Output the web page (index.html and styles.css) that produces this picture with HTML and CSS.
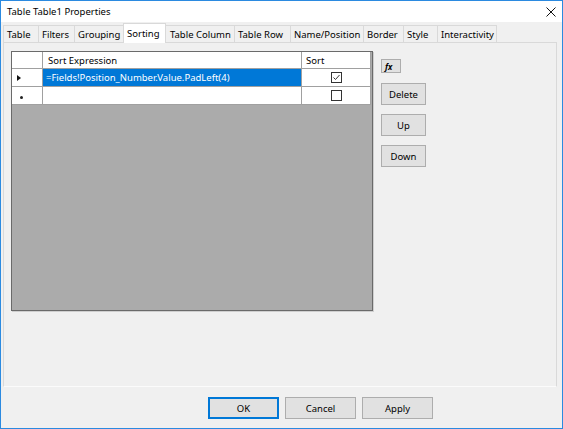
FILE: index.html
```html
<!DOCTYPE html>
<html>
<head>
<meta charset="utf-8">
<title>Table Table1 Properties</title>
<link rel="stylesheet" href="styles.css">
</head>
<body>
<div class="window">
  <div class="titlebar">
    <span class="title">Table Table1 Properties</span>
    <svg class="close" width="10" height="10" viewBox="0 0 10 10"><path d="M0.5 0.5 L9.5 9.5 M9.5 0.5 L0.5 9.5" stroke="#111" stroke-width="1" fill="none"/></svg>
  </div>
  <div class="tabs">
    <div class="tab w-table">Table</div>
    <div class="tab w-filters">Filters</div>
    <div class="tab w-grouping">Grouping</div>
    <div class="tab sel w-sorting">Sorting</div>
    <div class="tab w-tcol">Table Column</div>
    <div class="tab w-trow">Table Row</div>
    <div class="tab w-name">Name/Position</div>
    <div class="tab w-border">Border</div>
    <div class="tab w-style">Style</div>
    <div class="tab last w-inter">Interactivity</div>
  </div>
  <div class="panel">
    <div class="gridbox">
      <div class="grid">
        <div class="cell hdr"></div>
        <div class="cell hdr pad5">Sort Expression</div>
        <div class="cell hdr pad4">Sort</div>

        <div class="cell rowhdr"><span class="arrow"></span></div>
        <div class="cell selcell">=Fields!Position_Number.Value.PadLeft(4)</div>
        <div class="cell center">
          <svg class="chk" width="11" height="11" viewBox="0 0 11 11"><rect x="0.5" y="0.5" width="10" height="10" fill="#fff" stroke="#333"/><path d="M2.5 5.5 L4.5 7.5 L8.5 3" stroke="#333" stroke-width="1" fill="none"/></svg>
        </div>

        <div class="cell rowhdr"><span class="dot"></span></div>
        <div class="cell"></div>
        <div class="cell center">
          <svg class="chk" width="11" height="11" viewBox="0 0 11 11"><rect x="0.5" y="0.5" width="10" height="10" fill="#fff" stroke="#333"/></svg>
        </div>
      </div>
    </div>
    <div class="side">
      <div class="btn fx">fx</div>
      <div class="btn side-btn">Delete</div>
      <div class="btn side-btn">Up</div>
      <div class="btn side-btn">Down</div>
    </div>
  </div>
  <div class="footer">
    <div class="btn dlg default">OK</div>
    <div class="btn dlg">Cancel</div>
    <div class="btn dlg">Apply</div>
  </div>
</div>
</body>
</html>
```

FILE: styles.css
```css
* { box-sizing: border-box; }
html, body { margin: 0; padding: 0; }
body {
  font-family: "Noto Sans", "Open Sans", sans-serif;
  font-size: 9.5px;
  color: #000;
  background: #f0f0f0;
}
.window {
  width: 563px;
  height: 429px;
  border: 1px solid #2b8ae0;
  background: #f0f0f0;
  display: flex;
  flex-direction: column;
  overflow: hidden;
}
.titlebar {
  height: 21px;
  background: #fff;
  display: flex;
  align-items: center;
  padding-left: 6px;
  padding-right: 6px;
  flex: none;
}
.title { flex: 1; font-size: 9.5px; }
.close { display: block; }

.tabs {
  height: 20px;
  display: flex;
  align-items: flex-end;
  padding-left: 2px;
  flex: none;
}
.tab {
  height: 17px;
  border-top: 1px solid #d9d9d9;
  border-left: 1px solid #d9d9d9;
  background: #f0f0f0;
  padding-left: 3px;
  display: flex;
  align-items: center;
  white-space: nowrap;
  flex: none;
}
.tab.sel {
  height: 20px;
  background: #fff;
  border-right: 1px solid #d9d9d9;
  padding-bottom: 1px;
  margin-bottom: -1px;
  position: relative;
  z-index: 1;
}
.tab.sel + .tab { border-left: 0; padding-left: 4px; }
.tab.last { border-right: 1px solid #d9d9d9; padding-right: 2px; }
.w-table { width: 35px; }
.w-filters { width: 36px; }
.w-grouping { width: 49px; }
.w-sorting { width: 43px; }
.w-tcol { width: 68px; }
.w-trow { width: 56px; }
.w-name { width: 73px; }
.w-border { width: 40px; }
.w-style { width: 34px; }
.w-inter { width: auto; min-width: 56px; }

.panel {
  height: 345px;
  width: 554px;
  margin-left: 2px;
  border: 1px solid #d9d9d9;
  border-bottom-color: #fbfbfb;
  background: #f0f0f0;
  display: flex;
  align-items: flex-start;
  padding: 8px 0 0 7px;
  flex: none;
}
.gridbox {
  width: 362px;
  height: 260px;
  border: 1px solid #6a6a6a;
  background: #ababab;
  box-shadow: 1px 1px 0 #cfcfcf;
  flex: none;
}
.grid {
  display: grid;
  grid-template-columns: 30px 258px 68px;
  grid-template-rows: 16px 17px 17px;
  gap: 1px;
  padding: 0 1px 1px 0;
  background: #a0a0a0;
  width: max-content;
}
.cell {
  background: #fff;
  display: flex;
  align-items: center;
  white-space: nowrap;
  overflow: hidden;
}
.pad5 { padding-left: 5px; }
.pad4 { padding-left: 4px; }
.center { justify-content: center; }
.selcell {
  background: #0078d7;
  color: #fff;
  padding-left: 3px;
}
.rowhdr { padding-left: 5px; }
.arrow {
  width: 0;
  height: 0;
  border-left: 4px solid #111;
  border-top: 3.5px solid transparent;
  border-bottom: 3.5px solid transparent;
}
.dot {
  width: 3px;
  height: 3px;
  border-radius: 50%;
  background: #222;
  margin-left: 3px;
  margin-top: 4px;
}
.chk { display: block; }

.side {
  margin-left: 8px;
  padding-top: 8px;
  display: flex;
  flex-direction: column;
  gap: 9px;
}
.btn {
  background: #e1e1e1;
  border: 1px solid #adadad;
  display: flex;
  align-items: center;
  justify-content: center;
}
.fx {
  width: 20px;
  height: 14px;
  justify-content: flex-start;
  padding-left: 3px;
  font-weight: bold;
  font-style: italic;
  font-size: 8px;
  margin-bottom: 1px;
}
.side-btn {
  width: 45px;
  height: 22px;
}
.footer {
  flex: 1;
  display: flex;
  align-items: flex-start;
  padding-top: 10px;
  padding-left: 207px;
  gap: 6px;
}
.dlg {
  width: 71px;
  height: 22px;
}
.dlg.default {
  border: 2px solid #0078d7;
}
```
